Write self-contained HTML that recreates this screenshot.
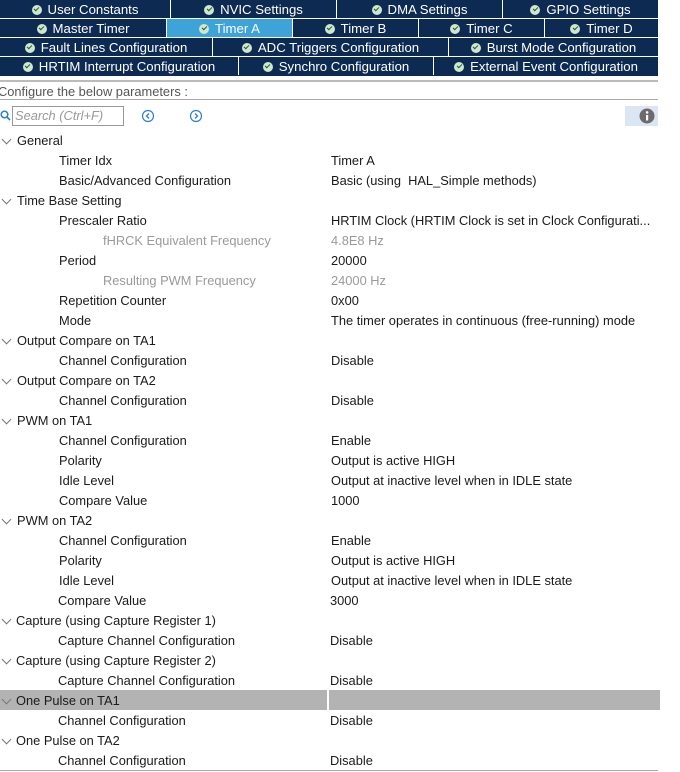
<!DOCTYPE html>
<html><head><style>
body{margin:0;width:680px;height:772px;background:#fff;font-family:"Liberation Sans",Arial,sans-serif;font-size:12.85px;color:#1a1a1a;position:relative;overflow:hidden}
.tr{position:absolute;left:0;width:658px;height:18px;background:#0c2a52;display:flex}
.tr div{height:18px;line-height:19px;color:#fff;text-align:center;border-right:1px solid #fff;box-sizing:border-box;font-size:13.2px}
.tr div:last-child{border-right:none}
.ck{display:inline-block;width:10px;height:10px;border-radius:50%;background:#cfe6cf;vertical-align:-1px;margin-right:6px;position:relative}
.ck:after{content:"";position:absolute;left:2.5px;top:2px;width:4px;height:2px;border-left:1.6px solid #1e5a2a;border-bottom:1.6px solid #1e5a2a;transform:rotate(-45deg)}
.a{background:#3ea3d8!important}
.row{position:absolute;left:0;width:660px;height:20px;line-height:20px}
.row span{position:absolute;white-space:nowrap;top:1px}
.g{color:#9a9a9a}
.chev{position:absolute;left:3px;top:6px;width:6px;height:6px;border-right:1px solid #777;border-bottom:1px solid #777;transform:rotate(45deg)}
</style></head><body>
<div class="tr" style="top:0"><div style="width:171px"><i class="ck"></i>User Constants</div><div style="width:166px"><i class="ck"></i>NVIC Settings</div><div style="width:166px"><i class="ck"></i>DMA Settings</div><div style="width:155px"><i class="ck"></i>GPIO Settings</div></div>
<div class="tr" style="top:19px"><div style="width:167px"><i class="ck"></i>Master Timer</div><div class="a" style="width:126px"><i class="ck"></i>Timer A</div><div style="width:126px"><i class="ck"></i>Timer B</div><div style="width:126px"><i class="ck"></i>Timer C</div><div style="width:113px"><i class="ck"></i>Timer D</div></div>
<div class="tr" style="top:38px"><div style="width:213px"><i class="ck"></i>Fault Lines Configuration</div><div style="width:236px"><i class="ck"></i>ADC Triggers Configuration</div><div style="width:209px"><i class="ck"></i>Burst Mode Configuration</div></div>
<div class="tr" style="top:57px;height:19px"><div style="width:239px"><i class="ck"></i>HRTIM Interrupt Configuration</div><div style="width:195px"><i class="ck"></i>Synchro Configuration</div><div style="width:224px"><i class="ck"></i>External Event Configuration</div></div>
<div style="position:absolute;top:80px;left:0;width:658px;height:2px;background:#bbb"></div>
<div style="position:absolute;top:84px;left:-2px;color:#555">Configure the below parameters :</div>
<div style="position:absolute;top:99px;left:0;width:658px;height:1px;background:#aaa"></div>
<svg style="position:absolute;left:0;top:110px" width="11" height="11"><circle cx="4.5" cy="4.5" r="3.3" fill="none" stroke="#2b7fd0" stroke-width="1.5"/><line x1="7" y1="7" x2="10" y2="10" stroke="#2b7fd0" stroke-width="1.6"/></svg>
<div style="position:absolute;left:12px;top:106px;width:112px;height:20px;border:1px solid #999;box-sizing:border-box;color:#999;font-style:italic;line-height:18px;padding-left:2px">Search (Ctrl+F)</div>
<svg style="position:absolute;left:141px;top:109px" width="14" height="14"><circle cx="7" cy="7" r="5.5" fill="none" stroke="#2b7fd0" stroke-width="1.2"/><path d="M8 4.5 L5.5 7 L8 9.5" fill="none" stroke="#2b7fd0" stroke-width="1.3"/></svg>
<svg style="position:absolute;left:189px;top:109px" width="14" height="14"><circle cx="7" cy="7" r="5.5" fill="none" stroke="#2b7fd0" stroke-width="1.2"/><path d="M6 4.5 L8.5 7 L6 9.5" fill="none" stroke="#2b7fd0" stroke-width="1.3"/></svg>
<div style="position:absolute;left:625px;top:106px;width:33px;height:20px;background:#dae6f2"></div>
<svg style="position:absolute;left:639px;top:108px" width="16" height="16"><circle cx="8" cy="8" r="7.5" fill="#6b6b6b"/><rect x="7" y="7" width="2.2" height="5.5" fill="#fff"/><circle cx="8.1" cy="4.4" r="1.3" fill="#fff"/></svg>

<div class="row" style="top:130px"><i class="chev"></i><span style="left:17px">General</span></div>
<div class="row" style="top:150px"><span style="left:59px">Timer Idx</span><span style="left:331px">Timer A</span></div>
<div class="row" style="top:170px"><span style="left:59px">Basic/Advanced Configuration</span><span style="left:331px">Basic (using &nbsp;HAL_Simple methods)</span></div>
<div class="row" style="top:190px"><i class="chev"></i><span style="left:17px">Time Base Setting</span></div>
<div class="row" style="top:210px"><span style="left:59px">Prescaler Ratio</span><span style="left:331px">HRTIM Clock (HRTIM Clock is set in Clock Configurati...</span></div>
<div class="row g" style="top:230px"><span style="left:103px">fHRCK Equivalent Frequency</span><span style="left:331px">4.8E8 Hz</span></div>
<div class="row" style="top:250px"><span style="left:59px">Period</span><span style="left:331px">20000</span></div>
<div class="row g" style="top:270px"><span style="left:103px">Resulting PWM Frequency</span><span style="left:331px">24000 Hz</span></div>
<div class="row" style="top:290px"><span style="left:59px">Repetition Counter</span><span style="left:331px">0x00</span></div>
<div class="row" style="top:310px"><span style="left:59px">Mode</span><span style="left:331px">The timer operates in continuous (free-running) mode</span></div>
<div class="row" style="top:330px"><i class="chev"></i><span style="left:17px">Output Compare on TA1</span></div>
<div class="row" style="top:350px"><span style="left:59px">Channel Configuration</span><span style="left:331px">Disable</span></div>
<div class="row" style="top:370px"><i class="chev"></i><span style="left:17px">Output Compare on TA2</span></div>
<div class="row" style="top:390px"><span style="left:59px">Channel Configuration</span><span style="left:331px">Disable</span></div>
<div class="row" style="top:410px"><i class="chev"></i><span style="left:17px">PWM on TA1</span></div>
<div class="row" style="top:430px"><span style="left:59px">Channel Configuration</span><span style="left:331px">Enable</span></div>
<div class="row" style="top:450px"><span style="left:59px">Polarity</span><span style="left:331px">Output is active HIGH</span></div>
<div class="row" style="top:470px"><span style="left:59px">Idle Level</span><span style="left:331px">Output at inactive level when in IDLE state</span></div>
<div class="row" style="top:490px"><span style="left:59px">Compare Value</span><span style="left:331px">1000</span></div>
<div class="row" style="top:510px"><i class="chev"></i><span style="left:17px">PWM on TA2</span></div>
<div class="row" style="top:530px"><span style="left:59px">Channel Configuration</span><span style="left:331px">Enable</span></div>
<div class="row" style="top:550px"><span style="left:59px">Polarity</span><span style="left:331px">Output is active HIGH</span></div>
<div class="row" style="top:570px"><span style="left:59px">Idle Level</span><span style="left:331px">Output at inactive level when in IDLE state</span></div>
<div class="row" style="top:590px"><span style="left:58px">Compare Value</span><span style="left:330px">3000</span></div>
<div class="row" style="top:610px"><i class="chev"></i><span style="left:16px">Capture (using Capture Register 1)</span></div>
<div class="row" style="top:630px"><span style="left:58px">Capture Channel Configuration</span><span style="left:330px">Disable</span></div>
<div class="row" style="top:650px"><i class="chev"></i><span style="left:16px">Capture (using Capture Register 2)</span></div>
<div class="row" style="top:670px"><span style="left:58px">Capture Channel Configuration</span><span style="left:330px">Disable</span></div>
<div class="row" style="top:690px;background:#b3b3b3"><div style="position:absolute;left:327px;top:0;width:2px;height:20px;background:#fff"></div><i class="chev"></i><span style="left:16px">One Pulse on TA1</span></div>
<div class="row" style="top:710px"><span style="left:58px">Channel Configuration</span><span style="left:330px">Disable</span></div>
<div class="row" style="top:730px"><i class="chev"></i><span style="left:16px">One Pulse on TA2</span></div>
<div class="row" style="top:750px"><span style="left:58px">Channel Configuration</span><span style="left:330px">Disable</span></div>
<div style="position:absolute;top:770px;left:0;width:658px;height:1px;background:#aaa"></div>
</body></html>
